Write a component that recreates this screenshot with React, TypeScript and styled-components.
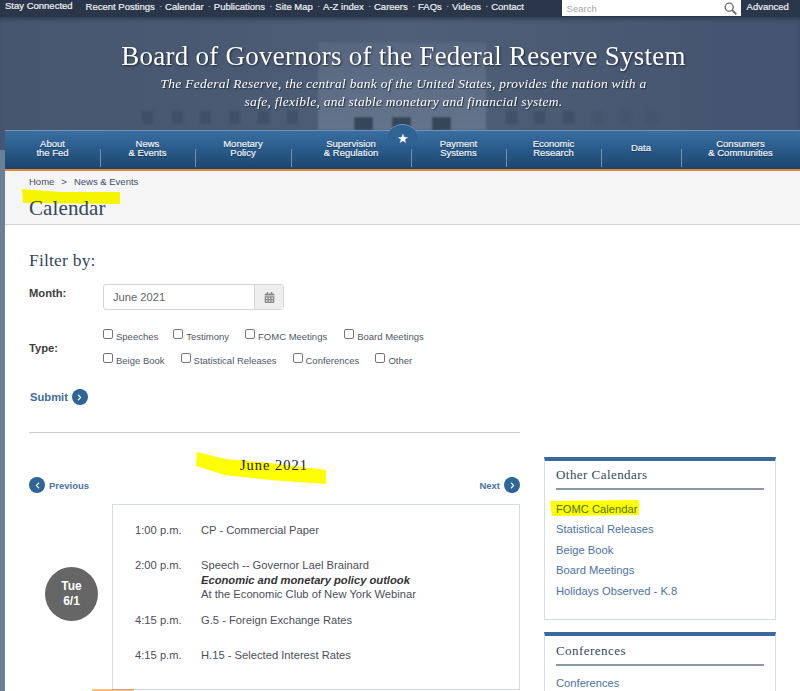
import React from "react";
import styled, { createGlobalStyle } from "styled-components";
import { FaCalendarAlt, FaChevronLeft, FaChevronRight } from "react-icons/fa";

const Global = createGlobalStyle`
  html, body { margin: 0; padding: 0; background: #fff; }
  * { box-sizing: border-box; }
`;

const SANS = `"Liberation Sans", Arial, sans-serif`;
const SERIF = `"Liberation Serif", "Times New Roman", serif`;

const Page = styled.div`
  position: relative;
  width: 800px;
  height: 691px;
  overflow: hidden;
  font-family: ${SANS};
  background: linear-gradient(#465670 0, #465670 150px, #6b7f99 150px);
`;

const TopBar = styled.div`
  height: 17px;
  background: #2a3649;
  display: flex;
  align-items: flex-start;
  padding-left: 5px;
  color: #eef1f5;
  font-size: 9.5px;
  line-height: 13px;
`;
const TopLinks = styled.nav`
  display: flex;
  flex: none;
  margin-left: 13px;
  width: 476px;
`;
const TopLink = styled.a<{ $first?: boolean }>`
  white-space: nowrap;
  margin-left: ${(p) => (p.$first ? 0 : "10.25px")};
  position: relative;
  -webkit-text-stroke: 0.2px #eef1f5;
  &::before {
    content: ${(p) => (p.$first ? "none" : '"·"')};
    position: absolute;
    left: -6px;
    top: -1px;
    color: #8c99aa;
  }
`;
const StayLink = styled.a`
  white-space: nowrap;
  -webkit-text-stroke: 0.2px #eef1f5;
  line-height: 11px;
`;
const SearchBox = styled.div`
  width: 179px;
  height: 16px;
  background: #fff;
  color: #a6a6a6;
  display: flex;
  align-items: center;
  justify-content: space-between;
  padding: 0 4px 0 5px;
  font-size: 9.5px;
  flex: none;
`;
const Advanced = styled.a`
  margin-left: 6px;
  line-height: 13px;
  -webkit-text-stroke: 0.2px #eef1f5;
`;

const Hero = styled.header`
  position: relative;
  height: 113px;
  background: linear-gradient(90deg, #46566f 0%, #4a5a73 30%, #505f78 50%, #4a5a73 72%, #435370 100%);
  box-shadow: inset 0 4px 4px -2px #2f3c50;
  overflow: hidden;
  text-align: center;
`;
const HeroArt = styled.svg`
  position: absolute;
  left: 0;
  top: 0;
  width: 800px;
  height: 113px;
`;
const HeroTitle = styled.h1`
  position: relative;
  margin: 0;
  padding-top: 23px;
  padding-left: 7px;
  font: 400 27px/32px ${SERIF};
  letter-spacing: 0.25px;
  color: #fff;
  text-shadow: 1px 1px 2px #1f2a3a;
`;
const HeroSub = styled.p`
  position: relative;
  margin: 3px 0 0;
  padding-left: 7px;
  font: italic 400 13.5px/18px ${SERIF};
  letter-spacing: 0.26px;
  color: #fff;
  text-shadow: 1px 1px 1px #1f2a3a;
`;

const NavWrap = styled.div`
  position: relative;
  margin-left: 5px;
`;
const Nav = styled.nav`
  display: grid;
  grid-template-columns: 95px 95px 96px 120px 95px 95px 80px 119px;
  height: 41px;
  background: linear-gradient(#3a6ea0 0%, #2c5f8f 40%, #1c436d 100%);
  border-top: 1px solid #6f93b5;
  border-bottom: 2px solid #e08a35;
`;
const NavItem = styled.a<{ $sep?: boolean }>`
  position: relative;
  display: flex;
  align-items: center;
  justify-content: center;
  text-align: center;
  color: #f2f5f8;
  font-size: 9.5px;
  line-height: 9px;
  padding: 0 0 5px 0;
  -webkit-text-stroke: 0.2px #f2f5f8;
  text-shadow: 0 1px 1px #143252;
  &::before {
    content: ${(p) => (p.$sep ? '""' : "none")};
    position: absolute;
    left: 0;
    bottom: 2px;
    height: 18px;
    width: 1px;
    background: #6f90b0;
  }
`;
const StarBadge = styled.div`
  position: absolute;
  left: 381px;
  top: -6px;
  width: 33px;
  height: 33px;
  border-radius: 50%;
  border-top: 1px solid #6f93b5;
  background: #2f6394;
  color: #fff;
  font-size: 13px;
  line-height: 27px;
  text-align: center;
  clip-path: inset(0 0 12px 0);
`;

const Content = styled.main`
  margin-left: 5px;
  background: #fff;
  height: 521px;
`;
const Crumbs = styled.section`
  height: 54px;
  background: #f5f5f5;
  border-bottom: 1px solid #cfd2d6;
  padding: 4px 24px 0;
`;
const Breadcrumb = styled.div`
  font-size: 9.5px;
  line-height: 13px;
  color: #3b5068;
  span { margin: 0 7px; }
`;
const PageTitle = styled.h2`
  margin: 7px 0 0;
  font: 400 21px/26px ${SERIF};
  letter-spacing: 0.1px;
  color: #33475f;
`;
const Columns = styled.div`
  display: flex;
  padding-left: 24px;
`;
const MainCol = styled.div`
  width: 491px;
  flex: none;
`;
const Side = styled.aside`
  width: 232px;
  flex: none;
  margin-left: 24px;
  padding-top: 232px;
  display: flex;
  flex-direction: column;
  gap: 12px;
`;
const FilterTitle = styled.h3`
  margin: 25px 0 0;
  font: 400 17.5px/20px ${SERIF};
  letter-spacing: 0.2px;
  color: #33475f;
`;
const MonthRow = styled.div`
  display: flex;
  margin-top: 14px;
`;
const FieldLabel = styled.label`
  width: 74px;
  font-size: 11.2px;
  font-weight: 700;
  color: #3d3d3d;
  line-height: 17px;
  padding-top: ${(p) => (p.htmlFor === "month" ? "1px" : "0")};
`;
const DateInput = styled.div`
  width: 181px;
  height: 26px;
  display: flex;
  border: 1px solid #d5d5d5;
  border-radius: 3px;
  font-size: 11.2px;
  line-height: 24px;
  color: #666;
`;
const DateText = styled.div`
  flex: 1;
  padding-left: 9px;
`;
const DateAddon = styled.div`
  width: 29px;
  background: #eee;
  border-left: 1px solid #d5d5d5;
  display: flex;
  align-items: center;
  justify-content: center;
  color: #8a8a8a;
  font-size: 11px;
`;
const TypeRow = styled.div`
  display: flex;
  align-items: center;
  margin-top: 18px;
`;
const CheckGrid = styled.div`
  display: flex;
  flex-direction: column;
  gap: 8px;
`;
const CheckLine = styled.div`
  display: flex;
  height: 16px;
`;
const CheckItem = styled.label<{ $gap: number }>`
  display: flex;
  align-items: flex-start;
  font-size: 9.5px;
  line-height: 16px;
  color: #4f5965;
  margin-right: ${(p) => p.$gap}px;
  white-space: nowrap;
  padding-top: 1px;
`;
const Box = styled.span`
  width: 10px;
  height: 10px;
  margin-right: 3px;
  border: 1px solid #777;
  border-radius: 2px;
  background: #fff;
  flex: none;
`;
const SubmitRow = styled.a`
  display: flex;
  align-items: center;
  gap: 4px;
  margin-top: 20px;
  padding-left: 1px;
  color: #3f6c9e;
  font-size: 11.2px;
  font-weight: 700;
  height: 18px;
`;
const RoundIcon = styled.span<{ $size: number }>`
  width: ${(p) => p.$size}px;
  height: ${(p) => p.$size}px;
  border-radius: 50%;
  background: #2f6497;
  color: #fff;
  display: inline-flex;
  align-items: center;
  justify-content: center;
  font-size: 7px;
  flex: none;
`;
const Divider = styled.hr`
  margin: 26px 0 0;
  border: 0;
  border-top: 1px solid #ccc;
`;
const MonthHeading = styled.h3`
  margin: 23px 0 0;
  text-align: center;
  font: 400 14.5px/18px ${SERIF};
  letter-spacing: 1px;
  color: #222;
  padding-right: 1px;
`;
const Pager = styled.div`
  display: flex;
  justify-content: space-between;
  align-items: center;
  height: 16px;
  margin-top: 3px;
`;
const PagerLink = styled.a`
  display: flex;
  align-items: center;
  gap: 4px;
  color: #4a74a5;
  font-size: 9.5px;
  font-weight: 700;
`;
const EventArea = styled.div`
  display: flex;
  align-items: center;
  margin-top: 11px;
`;
const DayBubble = styled.div`
  width: 53px;
  height: 54px;
  margin: 0 14px 6px 16px;
  border-radius: 50%;
  background: #666;
  color: #fff;
  font-size: 12px;
  font-weight: 700;
  line-height: 15px;
  text-align: center;
  display: flex;
  align-items: center;
  justify-content: center;
  flex: none;
`;
const EventCard = styled.div`
  width: 408px;
  flex: none;
  height: 186px;
  border: 1px solid #d3dae3;
  padding: 18px 0 0 22px;
`;
const EventRow = styled.div<{ $h: number }>`
  display: flex;
  height: ${(p) => p.$h}px;
  font-size: 11.2px;
  line-height: 14.5px;
  color: #4b4f58;
`;
const EventTime = styled.div`
  width: 66px;
  flex: none;
`;
const EventTitle = styled.div`
  font-weight: 700;
  font-style: italic;
  color: #333;
`;
const Panel = styled.section<{ $inner?: number }>`
  border: 1px solid #d5dde6;
  border-top: 4px solid #3a6a9c;
  padding: ${(p) => p.$inner ?? 6}px 11px 0;
`;
const PanelTitle = styled.h4`
  margin: 0;
  padding-bottom: 6px;
  border-bottom: 2px solid #8b98a8;
  font: 400 13px/15px ${SERIF};
  letter-spacing: 0.45px;
  color: #33475f;
`;
const PanelLinks = styled.div<{ $top?: number }>`
  margin-top: ${(p) => p.$top ?? 12}px;
  display: flex;
  flex-direction: column;
  gap: 6.4px;
  padding-bottom: 21px;
`;
const PanelLink = styled.a`
  font-size: 11.2px;
  line-height: 14px;
  color: #4d72a3;
`;
const Marks = styled.svg`
  position: absolute;
  left: 0;
  top: 0;
  width: 800px;
  height: 691px;
  mix-blend-mode: multiply;
  pointer-events: none;
`;

const topLinks = ["Recent Postings", "Calendar", "Publications", "Site Map", "A-Z index", "Careers", "FAQs", "Videos", "Contact"];
const navItems: string[][] = [
  ["About", "the Fed"],
  ["News", "& Events"],
  ["Monetary", "Policy"],
  ["Supervision", "& Regulation"],
  ["Payment", "Systems"],
  ["Economic", "Research"],
  ["Data"],
  ["Consumers", "& Communities"],
];
const checks1: [string, number][] = [["Speeches", 15], ["Testimony", 16], ["FOMC Meetings", 17], ["Board Meetings", 0]];
const checks2: [string, number][] = [["Beige Book", 16], ["Statistical Releases", 16], ["Conferences", 16], ["Other", 0]];
const windows = [142, 172, 200, 229, 258, 287, 506, 534, 563, 592, 620, 647];
const doors = [354, 392, 432];

const Art = () => (
  <HeroArt viewBox="0 0 800 113" aria-hidden="true">
    <defs>
      <filter id="soft"><feGaussianBlur stdDeviation="0.8" /></filter>
      <linearGradient id="fade" x1="0" y1="0" x2="0" y2="1">
        <stop offset="0" stopColor="#6c7c93" stopOpacity="0.3" />
        <stop offset="1" stopColor="#6c7c93" stopOpacity="0.75" />
      </linearGradient>
    </defs>
    <g filter="url(#soft)">
      <rect x="318" y="25" width="168" height="88" fill="url(#fade)" />
      {windows.map((x, i) => (
        <rect key={x} x={x} y={94} width={11} height={13} fill="#3a485e" opacity={i > 8 ? 0.25 : 0.55} />
      ))}
      {doors.map((x) => (
        <rect key={x} x={x} y={100} width={19} height={13} fill="#35445a" />
      ))}
    </g>
  </HeroArt>
);

export default function App() {
  return (
    <Page>
      <Global />
      <TopBar>
        <StayLink>Stay Connected</StayLink>
        <TopLinks>
          {topLinks.map((t, i) => (
            <TopLink key={t} $first={i === 0}>{t}</TopLink>
          ))}
        </TopLinks>
        <SearchBox>
          Search
          <svg width="13" height="13" viewBox="0 0 13 13" fill="none" stroke="#666" strokeWidth="1.3">
            <circle cx="5.2" cy="5.2" r="4" />
            <path d="M8.2 8.2L12.3 12.3" strokeWidth="1.9" />
          </svg>
        </SearchBox>
        <Advanced>Advanced</Advanced>
      </TopBar>
      <Hero>
        <Art />
        <HeroTitle>Board of Governors of the Federal Reserve System</HeroTitle>
        <HeroSub>
          The Federal Reserve, the central bank of the United States, provides the nation with a
          <br />
          safe, flexible, and stable monetary and financial system.
        </HeroSub>
      </Hero>
      <NavWrap>
        <Nav>
          {navItems.map((n, i) => (
            <NavItem key={n[0]} $sep={i > 0}>
              <span>
                {n[0]}
                {n[1] && <br />}
                {n[1]}
              </span>
            </NavItem>
          ))}
        </Nav>
        <StarBadge>★</StarBadge>
      </NavWrap>
      <Content>
        <Crumbs>
          <Breadcrumb>
            Home<span>&gt;</span>News &amp; Events
          </Breadcrumb>
          <PageTitle>Calendar</PageTitle>
        </Crumbs>
        <Columns>
          <MainCol>
            <FilterTitle>Filter by:</FilterTitle>
            <MonthRow>
              <FieldLabel htmlFor="month">Month:</FieldLabel>
              <DateInput>
                <DateText>June 2021</DateText>
                <DateAddon><FaCalendarAlt /></DateAddon>
              </DateInput>
            </MonthRow>
            <TypeRow>
              <FieldLabel>Type:</FieldLabel>
              <CheckGrid>
                <CheckLine>
                  {checks1.map(([t, g]) => (
                    <CheckItem key={t} $gap={g}><Box />{t}</CheckItem>
                  ))}
                </CheckLine>
                <CheckLine>
                  {checks2.map(([t, g]) => (
                    <CheckItem key={t} $gap={g}><Box />{t}</CheckItem>
                  ))}
                </CheckLine>
              </CheckGrid>
            </TypeRow>
            <SubmitRow>
              Submit
              <RoundIcon $size={16}><FaChevronRight /></RoundIcon>
            </SubmitRow>
            <Divider />
            <MonthHeading>June 2021</MonthHeading>
            <Pager>
              <PagerLink>
                <RoundIcon $size={16}><FaChevronLeft /></RoundIcon>
                Previous
              </PagerLink>
              <PagerLink>
                Next
                <RoundIcon $size={16}><FaChevronRight /></RoundIcon>
              </PagerLink>
            </Pager>
            <EventArea>
              <DayBubble>Tue<br />6/1</DayBubble>
              <EventCard>
                <EventRow $h={35}><EventTime>1:00 p.m.</EventTime><div>CP - Commercial Paper</div></EventRow>
                <EventRow $h={55}>
                  <EventTime>2:00 p.m.</EventTime>
                  <div>
                    Speech -- Governor Lael Brainard
                    <EventTitle>Economic and monetary policy outlook</EventTitle>
                    At the Economic Club of New York Webinar
                  </div>
                </EventRow>
                <EventRow $h={35}><EventTime>4:15 p.m.</EventTime><div>G.5 - Foreign Exchange Rates</div></EventRow>
                <EventRow $h={35}><EventTime>4:15 p.m.</EventTime><div>H.15 - Selected Interest Rates</div></EventRow>
              </EventCard>
            </EventArea>
          </MainCol>
          <Side>
            <Panel>
              <PanelTitle>Other Calendars</PanelTitle>
              <PanelLinks>
                <PanelLink>FOMC Calendar</PanelLink>
                <PanelLink>Statistical Releases</PanelLink>
                <PanelLink>Beige Book</PanelLink>
                <PanelLink>Board Meetings</PanelLink>
                <PanelLink>Holidays Observed - K.8</PanelLink>
              </PanelLinks>
            </Panel>
            <Panel $inner={7}>
              <PanelTitle>Conferences</PanelTitle>
              <PanelLinks $top={10}>
                <PanelLink>Conferences</PanelLink>
              </PanelLinks>
            </Panel>
          </Side>
        </Columns>
      </Content>
      <Marks viewBox="0 0 800 691" aria-hidden="true">
        <polygon points="22,189 60,192 120,192 120,204 23,203" fill="#ffff00" />
        <polygon points="197,452 225,459 270,463 326,470 326,484 270,480 225,475 196,466" fill="#ffff00" />
        <polygon points="550,501 639,500 639,515 552,516" fill="#ffff00" />
        <rect x="92" y="689" width="42" height="2" fill="#ffc080" />
      </Marks>
    </Page>
  );
}
